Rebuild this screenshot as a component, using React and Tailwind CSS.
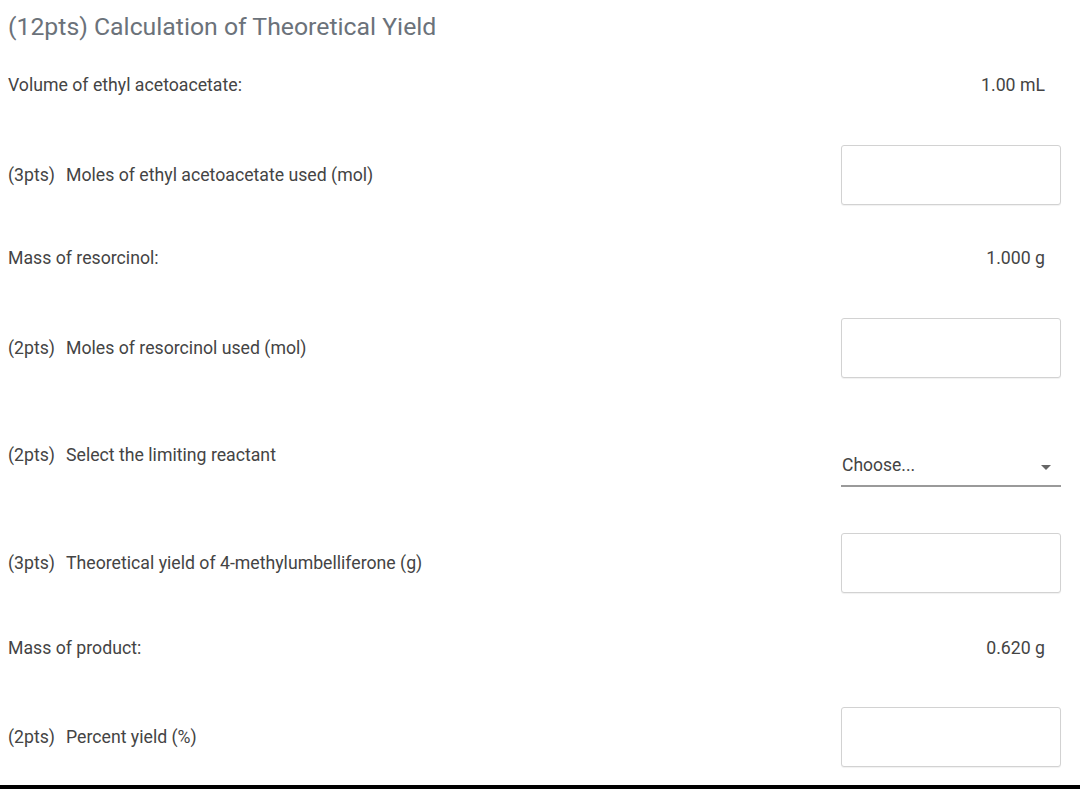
const rows = [
  { kind: "value", label: "Volume of ethyl acetoacetate:", value: "1.00 mL", h: "h-[62px]" },
  { kind: "input", pts: "(3pts)", label: "Moles of ethyl acetoacetate used (mol)", h: "h-[118px]" },
  { kind: "value", label: "Mass of resorcinol:", value: "1.000 g", h: "h-[48px]" },
  { kind: "input", pts: "(2pts)", label: "Moles of resorcinol used (mol)", h: "h-[132px]" },
  { kind: "select", pts: "(2pts)", label: "Select the limiting reactant", h: "h-[82px]" },
  { kind: "input", pts: "(3pts)", label: "Theoretical yield of 4-methylumbelliferone (g)", h: "h-[134px]" },
  { kind: "value", label: "Mass of product:", value: "0.620 g", h: "h-[36px]" },
  { kind: "input", pts: "(2pts)", label: "Percent yield (%)", h: "h-[119px] pt-[23px]" },
];

const Label = ({ pts, label }) => (
  <p className="text-[17.7px] text-[#444]">
    {pts && <span className="mr-[11px]">{pts}</span>}
    {label}
  </p>
);

const App = () => {
  return (
    <div className="w-[1080px] h-[789px] bg-white overflow-hidden font-['Roboto',sans-serif] flex flex-col">
      <div className="h-[54px] flex items-center pl-[8px]">
        <h1 className="text-[24.8px] text-[#6b727a]">(12pts) Calculation of Theoretical Yield</h1>
      </div>

      {rows.map((r, i) => (
        <div key={i} className={`flex items-center justify-between pl-[8px] pr-[19px] ${r.h}`}>
          <Label pts={r.pts} label={r.label} />
          {r.kind === "value" && (
            <span className="w-[220px] text-right pr-[16px] text-[17.7px] text-[#444]">{r.value}</span>
          )}
          {r.kind === "input" && (
            <input
              type="text"
              className="w-[220px] h-[60px] border-[1.5px] border-[#d2d2d2] rounded-[3px] bg-white shadow-[0_1px_1px_rgba(0,0,0,0.06)] outline-none"
            />
          )}
          {r.kind === "select" && (
            <div className="w-[220px] mt-[21px] h-[42px] flex items-center justify-between border-b-2 border-[#9a9a9a] pl-[1px] pr-[10px] pt-[2px]">
              <span className="text-[17.5px] text-[#444]">Choose...</span>
              <svg width="10" height="6" viewBox="0 0 10 6" className="mt-[4px]">
                <path d="M0 0 L10 0 L5 5 Z" fill="#666" />
              </svg>
            </div>
          )}
        </div>
      ))}

      <div className="h-[4px] bg-black w-full" />
    </div>
  );
};

export default App;
